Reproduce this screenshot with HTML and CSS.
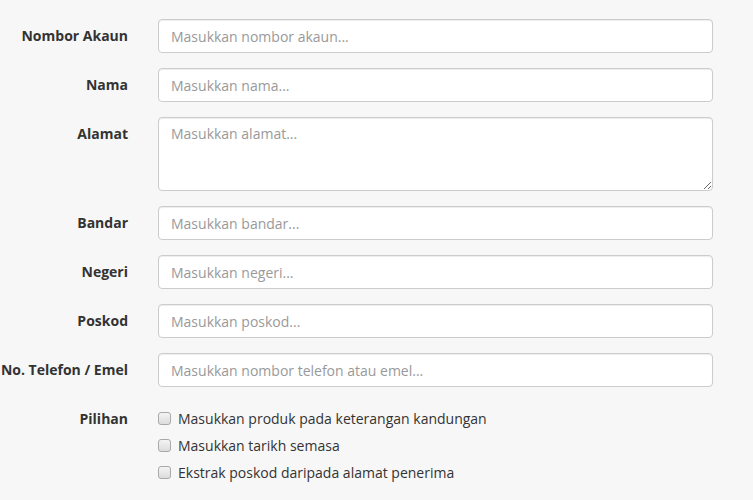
FILE: index.html
```html
<!DOCTYPE html>
<html>
<head>
<meta charset="utf-8">
<link rel="stylesheet" href="styles.css">
</head>
<body>
<form class="form">
  <div class="row">
    <label class="lbl">Nombor Akaun</label>
    <div class="field"><input class="ctl" type="text" placeholder="Masukkan nombor akaun..."></div>
  </div>
  <div class="row">
    <label class="lbl">Nama</label>
    <div class="field"><input class="ctl" type="text" placeholder="Masukkan nama..."></div>
  </div>
  <div class="row">
    <label class="lbl">Alamat</label>
    <div class="field"><textarea class="ctl area" rows="3" placeholder="Masukkan alamat..."></textarea></div>
  </div>
  <div class="row">
    <label class="lbl">Bandar</label>
    <div class="field"><input class="ctl" type="text" placeholder="Masukkan bandar..."></div>
  </div>
  <div class="row">
    <label class="lbl">Negeri</label>
    <div class="field"><input class="ctl" type="text" placeholder="Masukkan negeri..."></div>
  </div>
  <div class="row">
    <label class="lbl">Poskod</label>
    <div class="field"><input class="ctl" type="text" placeholder="Masukkan poskod..."></div>
  </div>
  <div class="row">
    <label class="lbl">No. Telefon / Emel</label>
    <div class="field"><input class="ctl" type="text" placeholder="Masukkan nombor telefon atau emel..."></div>
  </div>
  <div class="row">
    <label class="lbl">Pilihan</label>
    <div class="field">
      <label class="check"><span class="box"></span>Masukkan produk pada keterangan kandungan</label>
      <label class="check"><span class="box"></span>Masukkan tarikh semasa</label>
      <label class="check"><span class="box"></span>Ekstrak poskod daripada alamat penerima</label>
    </div>
  </div>
</form>
</body>
</html>
```
FILE: styles.css
```css
html, body {
  margin: 0;
  padding: 0;
  background: #f7f7f7;
  font-family: "Open Sans", "Liberation Sans", sans-serif;
  font-size: 14px;
  line-height: 20px;
  color: #333;
}
.form {
  padding-top: 19px;
}
.row {
  display: flex;
  margin-bottom: 15px;
}
.lbl {
  width: 143px;
  flex: none;
  box-sizing: border-box;
  padding-right: 15px;
  padding-top: 7px;
  text-align: right;
  font-weight: 700;
  color: #333;
  white-space: nowrap;
}
.field {
  margin-left: 15px;
  width: 555px;
  display: flex;
  flex-direction: column;
}
.ctl {
  display: block;
  box-sizing: border-box;
  width: 555px;
  height: 34px;
  padding: 6px 12px;
  font-family: "Open Sans", "Liberation Sans", sans-serif;
  font-size: 14px;
  line-height: 20px;
  color: #555;
  background: #fff;
  border: 1px solid #ccc;
  border-radius: 4px;
  box-shadow: inset 0 1px 1px rgba(0,0,0,.075);
  margin: 0;
  outline: none;
}
.ctl::placeholder {
  color: #999;
  opacity: 1;
}
.area {
  height: 74px;
  resize: vertical;
}
.check {
  display: flex;
  align-items: center;
  height: 27px;
  padding-top: 0;
  box-sizing: border-box;
  color: #333;
  font-weight: 400;
}
.check:first-child {
  margin-top: 3px;
}
.box {
  width: 11px;
  height: 11px;
  border: 1px solid #a9a9a9;
  border-radius: 3px;
  background: linear-gradient(#f4f4f4, #dcdcdc);
  margin-right: 7px;
  flex: none;
}
```
